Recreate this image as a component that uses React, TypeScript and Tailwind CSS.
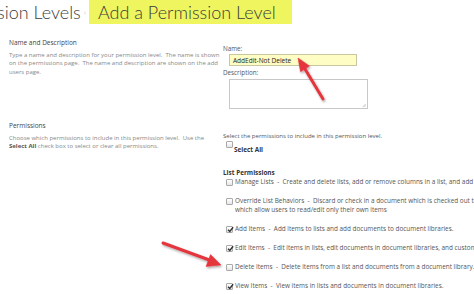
import React from 'react';

const font = { fontFamily: '"Open Sans", "Noto Sans", sans-serif' };
const titleFont = { fontFamily: 'Lato, "Open Sans", sans-serif' };

function Box({ checked = false }: { checked?: boolean }) {
  return (
    <span className="relative flex w-[7px] h-[7px] shrink-0 border border-[#a9a9a9] bg-gradient-to-b from-white to-[#e6e6e6] rounded-[1px]">
      {checked && (
        <svg viewBox="0 0 10 10" className="absolute left-[0px] top-[-1px] w-[7px] h-[7px]">
          <path d="M1.5 5.2 L4 7.8 L8.8 1.8" fill="none" stroke="#333" strokeWidth="2" />
        </svg>
      )}
    </span>
  );
}

function Perm({ name, desc, more, checked }: { name: string; desc: string; more?: string; checked?: boolean }) {
  return (
    <div className="flex items-start gap-[2px]">
      <span className="flex pt-[1px]">
        <Box checked={checked} />
      </span>
      <div className="whitespace-nowrap">
        <div>
          {name}&nbsp;&nbsp;-&nbsp;&nbsp;{desc}
        </div>
        {more && <div>{more}</div>}
      </div>
    </div>
  );
}

export default function App() {
  return (
    <div className="relative w-[474px] h-[294px] overflow-hidden bg-white text-[#444]" style={font}>
      {/* breadcrumb title */}
      <div className="flex items-center h-[24px] text-[18px] font-light leading-none text-[#3c3c3c] whitespace-nowrap" style={titleFont}>
        <span className="ml-[-3px]">sion Levels</span>
        <span className="mx-[3px] text-[8px] text-[#999]">›</span>
        <span className="bg-[#eef55f] h-[24px] flex items-center pl-[9px] pr-[16px]">Add a Permission Level</span>
      </div>

      {/* name section */}
      <div className="flex mt-[14px]">
        <div className="w-[214px] pl-[9px] shrink-0">
          <div className="text-[6.5px] text-[#444]">Name and Description</div>
          <div className="mt-[3px] text-[6px] leading-[8.6px] text-[#888] whitespace-nowrap">
            Type a name and description for your permission level.&nbsp; The name is shown
            <br />
            on the permissions page.&nbsp; The name and description are shown on the add
            <br />
            users page.
          </div>
        </div>
        <div className="pl-[9px] pt-[6px] text-[6.3px]">
          <div className="text-[#555]">Name:</div>
          <div className="ml-[6px] mt-[1px] w-[128px] h-[12px] border border-[#c8c8a0] bg-[#fdfdc4] flex items-center px-[3px] text-[6.5px] text-[#222]">
            AddEdit-Not Delete
          </div>
          <div className="mt-[2px] text-[#555]">Description:</div>
          <div className="relative ml-[6px] mt-[1px] w-[139px] h-[30px] border border-[#c8c8c8] bg-white">
            <svg viewBox="0 0 6 6" className="absolute right-[1px] bottom-[1px] w-[4px] h-[4px]">
              <path d="M6 1 L1 6 M6 3.5 L3.5 6" stroke="#999" strokeWidth="0.8" />
            </svg>
          </div>
        </div>
      </div>

      {/* permissions section */}
      <div className="flex mt-[12px]">
        <div className="w-[214px] pl-[9px] shrink-0">
          <div className="text-[6.5px] text-[#444]">Permissions</div>
          <div className="mt-[3px] text-[6px] leading-[8.6px] text-[#888] whitespace-nowrap">
            Choose which permissions to include in this permission level.&nbsp; Use the
            <br />
            <b className="text-[#555]">Select All</b> check box to select or clear all permissions.
          </div>
        </div>
        <div className="pl-[9px] pt-[11px] text-[6.4px] leading-[8.5px] text-[#555]">
          <div className="text-[6px]">Select the permissions to include in this permission level.</div>
          <div className="ml-[3px] mt-[1px] flex">
            <Box />
          </div>
          <div className="ml-[11px] mt-[-2px] font-bold text-[#333]">Select All</div>
          <div className="mt-[14px] font-bold text-[#333]">List Permissions</div>
          <div className="ml-[3px] mt-[1px] flex flex-col gap-[10.5px]">
            <Perm name="Manage Lists" desc="Create and delete lists, add or remove columns in a list, and add or remove public views of a list." />
            <Perm
              name="Override List Behaviors"
              desc="Discard or check in a document which is checked out to another user, and change or override settings"
              more="which allow users to read/edit only their own items"
            />
            <Perm checked name="Add Items" desc="Add items to lists and add documents to document libraries." />
            <Perm checked name="Edit Items" desc="Edit items in lists, edit documents in document libraries, and customize Web Part Pages." />
            <Perm name="Delete Items" desc="Delete items from a list and documents from a document library." />
            <Perm checked name="View Items" desc="View items in lists and documents in document libraries." />
          </div>
        </div>
      </div>

      {/* red arrows */}
      <svg className="absolute inset-0 w-[474px] h-[294px] pointer-events-none" viewBox="0 0 474 294">
        <defs>
          <filter id="sh" x="-20%" y="-20%" width="140%" height="140%">
            <feDropShadow dx="1" dy="1.5" stdDeviation="1.2" floodColor="#000" floodOpacity="0.35" />
          </filter>
        </defs>
        <g filter="url(#sh)" fill="#e5343c" stroke="#e5343c">
          <line x1="323" y1="99" x2="305" y2="69" strokeWidth="3" strokeLinecap="round" />
          <polygon points="298,58 309.5,66 300.5,71.8" strokeWidth="0.5" />
          <line x1="163" y1="243" x2="208" y2="259.5" strokeWidth="3" strokeLinecap="round" />
          <polygon points="221,265 210.5,254.5 206,266.5" strokeWidth="0.5" />
        </g>
      </svg>
    </div>
  );
}
